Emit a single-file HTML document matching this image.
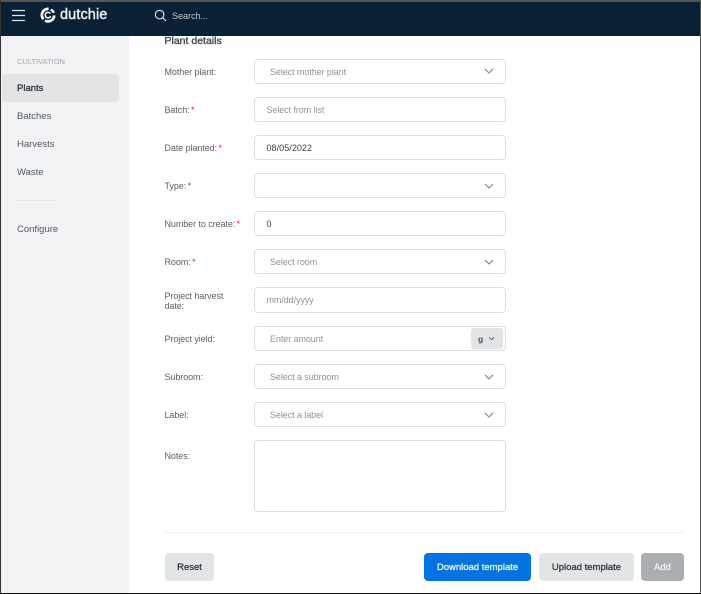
<!DOCTYPE html>
<html><head><meta charset="utf-8"><style>
*{box-sizing:border-box}
html,body{margin:0;padding:0}
body{width:701px;height:594px;position:relative;overflow:hidden;background:#fff;font-family:"Liberation Sans",sans-serif;}
.a{position:absolute;white-space:nowrap}
#wrap{position:absolute;left:0;top:0;width:701px;height:594px;filter:blur(.35px)}
.lab{position:absolute;left:164.5px;font-size:9px;color:#5a6068;line-height:10px;letter-spacing:-.08px}
.lab i{color:#e2202c;font-style:normal;margin-left:1.5px}
.f{position:absolute;left:253.5px;width:252px;height:25.5px;border:1px solid #dcdfe1;border-radius:4px;background:#fff}
.t{position:absolute;font-size:9px;line-height:12px;color:#8d9399;white-space:nowrap;letter-spacing:-.08px}
.nav{position:absolute;left:17px;font-size:9.5px;color:#54595f;line-height:12px}
.btn{position:absolute;top:553px;height:28px;border-radius:4px;font-size:9.5px;-webkit-text-stroke:.3px currentColor;text-align:center;line-height:28.5px;padding-top:.5px}
svg.c{position:absolute;left:483px;width:12px;height:12px}
</style></head><body>
<div id="wrap">
<div class="a" style="left:0;top:1px;width:700px;height:34.5px;background:#0a2035"></div>
<div class="a" style="left:0;top:36px;width:129px;height:558px;background:#f1f2f4"></div>

<svg class="a" style="left:12px;top:9px" width="14" height="14" viewBox="0 0 14 14"><path d="M0 1.5H13M0 6.5H13M0 11.5H13" stroke="#dfe3e6" stroke-width="1.2" fill="none"/></svg>
<svg class="a" style="left:40px;top:7px" width="16" height="16" viewBox="0 0 16 16" fill="none" stroke="#fff"><path d="M3.4 12.2A6.2 6.2 0 0 1 8.6 1.9" stroke-width="2.7"/><path d="M5 13.6A6.2 6.2 0 0 0 14.2 8.4" stroke-width="2.7"/><path d="M10.8 2.7A6.2 6.2 0 0 1 13.8 5.8" stroke-width="2.4"/><path d="M10.4 6.6A2.8 2.8 0 1 0 10.6 9.2" stroke-width="1.5"/></svg>
<div class="a" style="left:60px;top:6px;font-size:14.5px;line-height:18px;color:#f2f4f5;-webkit-text-stroke:.4px #f2f4f5;letter-spacing:.1px">dutchie</div>
<svg class="a" style="left:154px;top:9px" width="13" height="13" viewBox="0 0 13 13"><circle cx="5.6" cy="5.6" r="4.3" stroke="#e8ebed" stroke-width="1.1" fill="none"/><path d="M8.8 8.8L12 12" stroke="#e8ebed" stroke-width="1.1"/></svg>
<div class="a" style="left:172px;top:10px;font-size:9px;line-height:12px;color:#c3c9ce">Search...</div>

<div class="a" style="left:17px;top:56px;font-size:7.5px;line-height:11px;color:#a0a5a9">CULTIVATION</div>
<div class="a" style="left:2px;top:74px;width:117px;height:28px;background:#e2e4e6;border-radius:4px"></div>
<div class="nav" style="top:83px;color:#30363b;-webkit-text-stroke:.3px #30363b">Plants</div>
<div class="nav" style="top:111px">Batches</div>
<div class="nav" style="top:139px">Harvests</div>
<div class="nav" style="top:167px">Waste</div>
<div class="a" style="left:17px;top:200px;width:39px;height:1px;background:#e3e5e7"></div>
<div class="nav" style="top:224px">Configure</div>

<div class="a" style="left:164.5px;top:35px;font-size:10.5px;line-height:12px;-webkit-text-stroke:.3px #3c4146;color:#3c4146">Plant details</div>

<div class="lab" style="top:67px">Mother plant:</div>
<div class="f" style="top:58.5px"></div><div class="t" style="left:270px;top:66px">Select mother plant</div>
<svg class="c" style="top:65px" viewBox="0 0 12 12"><path d="M2 4l4 4 4-4" stroke="#7d8389" stroke-width="1.1" fill="none"/></svg>

<div class="lab" style="top:105px">Batch:<i>*</i></div>
<div class="f" style="top:96.5px"></div><div class="t" style="left:266.5px;top:104px">Select from list</div>

<div class="lab" style="top:143px">Date planted:<i>*</i></div>
<div class="f" style="top:134.5px"></div><div class="t" style="left:266.5px;top:142px;color:#3d4247;letter-spacing:.05px">08/05/2022</div>

<div class="lab" style="top:181px">Type:<i>*</i></div>
<div class="f" style="top:172.5px"></div>
<svg class="c" style="top:180px" viewBox="0 0 12 12"><path d="M2 4l4 4 4-4" stroke="#7d8389" stroke-width="1.1" fill="none"/></svg>

<div class="lab" style="top:219px">Number to create:<i>*</i></div>
<div class="f" style="top:210.5px"></div><div class="t" style="left:266.5px;top:218px;color:#3d4247">0</div>

<div class="lab" style="top:257px">Room:<i>*</i></div>
<div class="f" style="top:248.5px"></div><div class="t" style="left:270px;top:256px">Select room</div>
<svg class="c" style="top:256px" viewBox="0 0 12 12"><path d="M2 4l4 4 4-4" stroke="#7d8389" stroke-width="1.1" fill="none"/></svg>

<div class="lab" style="top:290.5px">Project harvest<br>date:</div>
<div class="f" style="top:287px"></div><div class="t" style="left:266.5px;top:294px">mm/dd/yyyy</div>

<div class="lab" style="top:334px">Project yield:</div>
<div class="f" style="top:325.5px"></div><div class="t" style="left:270px;top:332.5px">Enter amount</div>
<div class="a" style="left:471px;top:328px;width:32px;height:21px;background:#e2e4e6;border-radius:3px"></div>
<div class="t" style="left:478px;top:332.5px;color:#4b5056;font-weight:bold;font-size:8.5px">g</div>
<svg class="a" style="left:487px;top:334px" width="9" height="9" viewBox="0 0 9 9"><path d="M2 3.2l2.5 2.5 2.5-2.5" stroke="#5d6268" stroke-width="1" fill="none"/></svg>

<div class="lab" style="top:372px">Subroom:</div>
<div class="f" style="top:363.5px"></div><div class="t" style="left:270px;top:371px">Select a subroom</div>
<svg class="c" style="top:371px" viewBox="0 0 12 12"><path d="M2 4l4 4 4-4" stroke="#7d8389" stroke-width="1.1" fill="none"/></svg>

<div class="lab" style="top:410px">Label:</div>
<div class="f" style="top:401.5px"></div><div class="t" style="left:270px;top:409px">Select a label</div>
<svg class="c" style="top:409px" viewBox="0 0 12 12"><path d="M2 4l4 4 4-4" stroke="#7d8389" stroke-width="1.1" fill="none"/></svg>

<div class="lab" style="top:451px">Notes:</div>
<div class="f" style="top:440px;height:71.5px"></div>

<div class="a" style="left:164px;top:532px;width:520px;height:1px;background:#eceef0"></div>

<div class="btn" style="left:165px;width:49px;background:#e2e5e6;color:#33393e">Reset</div>
<div class="btn" style="left:424px;width:107px;background:#0273e0;color:#f0f6fd">Download template</div>
<div class="btn" style="left:539px;width:95px;background:#e2e5e6;color:#33393e">Upload template</div>
<div class="btn" style="left:641px;width:43px;background:#a9aeb1;color:#f0f1f2">Add</div>

<div class="a" style="left:0;top:0;width:701px;height:1.5px;background:#555"></div>
<div class="a" style="left:0;top:0;width:1px;height:594px;background:#333"></div>
<div class="a" style="left:699.5px;top:0;width:1px;height:594px;background:#555"></div>
<div class="a" style="left:0;top:593px;width:701px;height:1px;background:#111"></div>
</div>
</body></html>
